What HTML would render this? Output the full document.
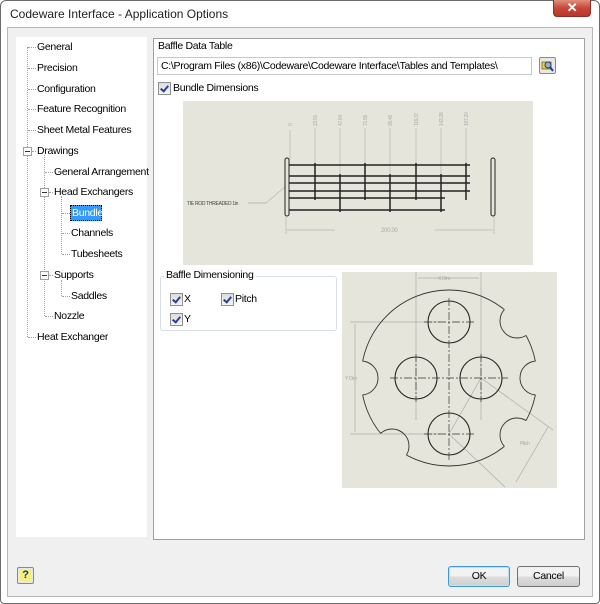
<!DOCTYPE html>
<html><head><style>
*{margin:0;padding:0;box-sizing:border-box}
body{width:600px;height:604px;background:#fff;font-family:"Liberation Sans",sans-serif;font-size:10.5px;letter-spacing:-0.3px;color:#000;position:relative;overflow:hidden}
.a{position:absolute;white-space:nowrap}
.cb{position:absolute;width:13px;height:13px;border:1px solid #8e8f8f;background:linear-gradient(#dcdcdc,#f6f6f6)}
.cb:after{content:"";position:absolute;left:3px;top:1px;width:3px;height:6px;border:solid #2a3f9a;border-width:0 2px 2px 0;transform:rotate(40deg)}
.dv{position:absolute;border-left:1px dotted #a0a0a0;width:0}
.dh{position:absolute;border-top:1px dotted #a0a0a0;height:0}
.ex{position:absolute;width:9px;height:9px;border:1px solid #a0a0a0;background:#fff}
.ex:after{content:"";position:absolute;left:1px;top:3px;width:5px;height:1px;background:#333}
.btn{position:absolute;height:21px;border:1px solid #707070;border-radius:3px;background:linear-gradient(#f2f2f2 50%,#dddddd 50%,#cfcfcf);text-align:center;line-height:19px}
</style></head><body>
<div class="a" style="left:0;top:0;width:600px;height:604px;border:1px solid #6b6b6b;border-radius:6px 6px 4px 4px;background:#fff"></div>
<div class="a" style="left:10px;top:7px;font-size:12px;letter-spacing:0;color:#222">Codeware Interface - Application Options</div>
<div class="a" style="left:553px;top:0;width:38px;height:17px;background:linear-gradient(#e09080,#c7483a 50%,#b8362a);border:1px solid #8a3028;border-top:none;border-radius:0 0 4px 4px;color:#fff;font-size:13px;font-weight:bold;text-align:center;line-height:16px">✕</div>
<div class="a" style="left:7px;top:27px;width:586px;height:570px;background:#f0f0f0;border:1px solid #b8b8b8"></div>
<div class="a" style="left:16px;top:37px;width:131px;height:500px;background:#fff"></div>
<div class="dv" style="left:27px;top:47px;height:290px"></div>
<div class="dh" style="left:28px;top:47px;width:8px"></div>
<div class="dh" style="left:28px;top:68px;width:8px"></div>
<div class="dh" style="left:28px;top:89px;width:8px"></div>
<div class="dh" style="left:28px;top:109px;width:8px"></div>
<div class="dh" style="left:28px;top:130px;width:8px"></div>
<div class="dh" style="left:28px;top:337px;width:8px"></div>
<div class="dv" style="left:44px;top:155px;height:161px"></div>
<div class="dh" style="left:45px;top:172px;width:8px"></div>
<div class="dh" style="left:45px;top:316px;width:8px"></div>
<div class="dv" style="left:61px;top:196px;height:58px"></div>
<div class="dh" style="left:62px;top:213px;width:8px"></div>
<div class="dh" style="left:62px;top:233px;width:8px"></div>
<div class="dh" style="left:62px;top:254px;width:8px"></div>
<div class="dv" style="left:61px;top:280px;height:16px"></div>
<div class="dh" style="left:62px;top:296px;width:8px"></div>
<div class="ex" style="left:23px;top:147px"></div>
<div class="ex" style="left:40px;top:188px"></div>
<div class="ex" style="left:40px;top:271px"></div>
<div class="dh" style="left:32px;top:151px;width:4px"></div>
<div class="dh" style="left:49px;top:192px;width:4px"></div>
<div class="dh" style="left:49px;top:275px;width:4px"></div>
<div class="a" style="left:37px;top:41px">General</div>
<div class="a" style="left:37px;top:62px">Precision</div>
<div class="a" style="left:37px;top:83px">Configuration</div>
<div class="a" style="left:37px;top:103px">Feature Recognition</div>
<div class="a" style="left:37px;top:124px">Sheet Metal Features</div>
<div class="a" style="left:37px;top:145px">Drawings</div>
<div class="a" style="left:54px;top:166px">General Arrangement</div>
<div class="a" style="left:54px;top:186px">Head Exchangers</div>
<div class="a" style="left:70px;top:205px;width:32px;height:16px;background:#3399ff;border:1px dotted #000;color:#fff;padding:1px 0 0 1px">Bundle</div>
<div class="a" style="left:71px;top:227px">Channels</div>
<div class="a" style="left:71px;top:248px">Tubesheets</div>
<div class="a" style="left:54px;top:269px">Supports</div>
<div class="a" style="left:71px;top:290px">Saddles</div>
<div class="a" style="left:54px;top:310px">Nozzle</div>
<div class="a" style="left:37px;top:331px">Heat Exchanger</div>
<div class="a" style="left:153px;top:38px;width:432px;height:502px;background:#fff;border:1px solid #a0a0a0"></div>
<div class="a" style="left:158px;top:40px">Baffle Data Table</div>
<div class="a" style="left:157px;top:57px;width:375px;height:18px;border:1px solid #c8c8c8;padding:2px 0 0 3px">C:\Program Files (x86)\Codeware\Codeware Interface\Tables and Templates\</div>
<div class="a" style="left:539px;top:57px;width:17px;height:17px;border:1px solid #8a8a8a;border-radius:2px;background:#e8e8e8">
<svg width="15" height="15" style="position:absolute;left:0;top:0"><rect x="2" y="4" width="9" height="7" fill="#e8d040" stroke="#806010" stroke-width="0.8"/><circle cx="8" cy="7" r="3" fill="#9ad" stroke="#246" stroke-width="1"/><line x1="10" y1="9" x2="13" y2="13" stroke="#1a3fa0" stroke-width="2"/></svg></div>
<div class="cb" style="left:158px;top:82px"></div>
<div class="a" style="left:173px;top:82px">Bundle Dimensions</div>
<svg class="a" style="left:183px;top:101px" width="350" height="164" viewBox="183 101 350 164">
<rect x="183" y="101" width="350" height="164" fill="#e6e5dc"/>
<g stroke="#b8b8b0" stroke-width="0.7">
<line x1="290" y1="130" x2="290" y2="160"/><line x1="315" y1="128" x2="315" y2="165"/><line x1="340" y1="128" x2="340" y2="176"/><line x1="365" y1="128" x2="365" y2="165"/><line x1="390" y1="128" x2="390" y2="176"/><line x1="416" y1="128" x2="416" y2="165"/><line x1="441" y1="128" x2="441" y2="176"/><line x1="466" y1="128" x2="466" y2="165"/>
<line x1="286" y1="216" x2="286" y2="234"/><line x1="494" y1="216" x2="494" y2="234"/>
<line x1="287" y1="230" x2="335" y2="230"/><line x1="435" y1="230" x2="493" y2="230"/>
<line x1="266" y1="203" x2="286" y2="186"/>
</g>
<g fill="#aaa" font-size="5" font-family="Liberation Sans">
<text transform="translate(292,126) rotate(-90)">0</text>
<text transform="translate(317,126) rotate(-90)">23.91</text>
<text transform="translate(342,126) rotate(-90)">47.64</text>
<text transform="translate(367,126) rotate(-90)">71.55</text>
<text transform="translate(392,126) rotate(-90)">95.46</text>
<text transform="translate(418,126) rotate(-90)">119.37</text>
<text transform="translate(443,126) rotate(-90)">143.28</text>
<text transform="translate(468,126) rotate(-90)">167.20</text>
<text x="381" y="232" font-size="6">200.00</text>
</g>
<text x="187" y="205" font-size="5" fill="#444" font-family="Liberation Sans">TIE ROD THREADED 1in</text>
<line x1="248" y1="203" x2="266" y2="203" stroke="#888" stroke-width="0.6"/>
<g stroke="#222" fill="none">
<rect x="285" y="158" width="4" height="58" rx="2" stroke-width="1"/>
<rect x="491" y="158" width="4" height="58" rx="2" stroke-width="1"/>
<g stroke-width="1.5">
<line x1="289" y1="165" x2="470" y2="165"/><line x1="289" y1="176" x2="470" y2="176"/><line x1="289" y1="183" x2="470" y2="183"/><line x1="289" y1="191" x2="470" y2="191"/><line x1="289" y1="198" x2="445" y2="198"/><line x1="289" y1="210" x2="445" y2="210"/>
<line x1="315" y1="163" x2="315" y2="200"/><line x1="365" y1="163" x2="365" y2="200"/><line x1="416" y1="163" x2="416" y2="200"/><line x1="466" y1="163" x2="466" y2="200"/>
<line x1="340" y1="174" x2="340" y2="212"/><line x1="390" y1="174" x2="390" y2="212"/><line x1="441" y1="174" x2="441" y2="212"/>
</g></g>
</svg>
<div class="a" style="left:160px;top:276px;width:177px;height:55px;border:1px solid #d5dfe5;border-radius:3px"></div>
<div class="a" style="left:164px;top:269px;background:#fff;padding:0 2px">Baffle Dimensioning</div>
<div class="cb" style="left:170px;top:293px"></div><div class="a" style="left:184px;top:293px">X</div>
<div class="cb" style="left:221px;top:293px"></div><div class="a" style="left:235px;top:293px">Pitch</div>
<div class="cb" style="left:170px;top:313px"></div><div class="a" style="left:184px;top:313px">Y</div>
<svg class="a" style="left:342px;top:272px" width="215" height="216" viewBox="342 272 215 216">
<defs>
<clipPath id="cc"><circle cx="449" cy="378" r="88"/></clipPath>
<mask id="mk"><rect x="342" y="272" width="215" height="216" fill="#fff"/>
<g fill="#000"><circle cx="361" cy="378" r="17"/><circle cx="517" cy="321" r="17"/><circle cx="537" cy="378" r="17"/><circle cx="517" cy="435" r="17"/><circle cx="392" cy="446" r="17"/></g></mask>
</defs>
<rect x="342" y="272" width="215" height="216" fill="#e6e5dc"/>
<g stroke="#aaa" stroke-width="0.7" fill="none">
<line x1="416" y1="272" x2="416" y2="420"/><line x1="481" y1="272" x2="481" y2="420"/>
<line x1="418" y1="278" x2="479" y2="278"/>
<line x1="350" y1="322" x2="440" y2="322"/><line x1="350" y1="434" x2="440" y2="434"/>
<line x1="355" y1="324" x2="355" y2="432"/>
<line x1="449" y1="434" x2="505" y2="487"/><line x1="481" y1="378" x2="553" y2="430"/>
<line x1="548" y1="427" x2="516" y2="482"/>
<line x1="481" y1="378" x2="449" y2="434"/>
</g>
<g fill="#aaa" font-size="5" font-family="Liberation Sans"><text x="438" y="280">X Dim</text><text x="345" y="380">Y Dim</text><text x="520" y="445">Pitch</text></g>
<circle cx="449" cy="378" r="88" fill="none" stroke="#333" stroke-width="0.9" mask="url(#mk)"/>
<g clip-path="url(#cc)" fill="none" stroke="#333" stroke-width="0.9">
<circle cx="361" cy="378" r="17"/><circle cx="517" cy="321" r="17"/><circle cx="537" cy="378" r="17"/><circle cx="517" cy="435" r="17"/><circle cx="392" cy="446" r="17"/>
</g>
<g fill="none" stroke="#222" stroke-width="1.1">
<circle cx="449" cy="322" r="21"/><circle cx="416" cy="378" r="21"/><circle cx="481" cy="378" r="21"/><circle cx="449" cy="434" r="21"/>
</g>
<g stroke="#333" stroke-width="0.7" stroke-dasharray="8,2,2,2">
<line x1="449" y1="298" x2="449" y2="460"/><line x1="416" y1="354" x2="416" y2="402"/><line x1="481" y1="354" x2="481" y2="402"/>
<line x1="424" y1="322" x2="474" y2="322"/><line x1="390" y1="378" x2="508" y2="378"/><line x1="424" y1="434" x2="474" y2="434"/>
</g>
</svg>
<div class="a" style="left:17px;top:567px;width:17px;height:17px;border:1px solid #888;border-radius:2px;background:#e8e8e8;font-weight:bold;font-size:11px;color:#1a2a90;text-align:center;line-height:15px"><span style="background:#f5f07a;padding:0 2px">?</span></div>
<div class="btn" style="left:448px;top:566px;width:62px;border-color:#3c9ad8;box-shadow:inset 0 0 0 1px #b8e0f8">OK</div>
<div class="btn" style="left:517px;top:566px;width:63px">Cancel</div>
</body></html>
